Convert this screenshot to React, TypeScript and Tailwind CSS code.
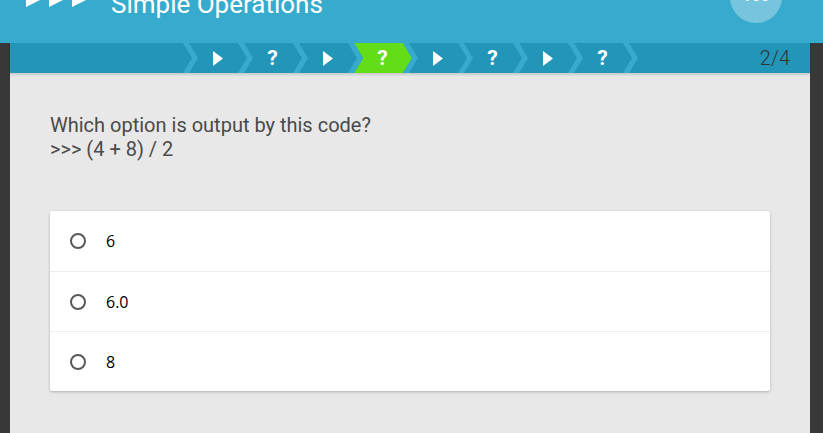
import React from "react";

const SEP = "0,0 6,0 15,15 6,30 0,30 9,15";
const GREEN = "6,0 55,0 64,15 55,30 6,30 15,15";

function Play() {
  return (
    <svg width="10" height="15" viewBox="0 0 10 15">
      <polygon points="0,0 10,7.5 0,15" fill="#ffffff" />
    </svg>
  );
}

function Step({ kind, active }: { kind: "play" | "q"; active?: boolean }) {
  return (
    <div className="relative w-[55px] h-[30px] shrink-0">
      <svg
        className="absolute left-0 top-0 overflow-visible"
        width="55"
        height="30"
        viewBox="0 0 55 30"
      >
        {active && <polygon points={GREEN} fill="#62dd18" />}
        <polygon points={SEP} fill="#37abcd" />
      </svg>
      <div className="relative h-full flex items-center justify-center pl-[14px]">
        {kind === "play" ? (
          <Play />
        ) : (
          <span className="text-white font-bold text-[21px] leading-none">?</span>
        )}
      </div>
    </div>
  );
}

export default function App() {
  const steps: { kind: "play" | "q"; active?: boolean }[] = [
    { kind: "play" },
    { kind: "q" },
    { kind: "play" },
    { kind: "q", active: true },
    { kind: "play" },
    { kind: "q" },
    { kind: "play" },
    { kind: "q" },
  ];
  const options = ["6", "6.0", "8"];
  return (
    <div
      className="w-[823px] h-[433px] overflow-hidden bg-[#383838]"
      style={{ fontFamily: "Roboto, 'Liberation Sans', sans-serif" }}
    >
      <header className="h-[43px] bg-[#37abcd] overflow-hidden flex items-start pl-[26px]">
        <div className="flex gap-[7px] -mt-[9px]">
          {[0, 1, 2].map((i) => (
            <svg key={i} width="16" height="16" viewBox="0 0 16 16">
              <polygon points="0,0 16,8 0,16" fill="#ffffff" />
            </svg>
          ))}
        </div>
        <div className="ml-[23px] -mt-[11px] text-white text-[26px] leading-[30px]">
          Simple Operations
        </div>
        <div className="ml-auto mr-[41px] -mt-[29px] w-[52px] h-[52px] rounded-full bg-[#76c4dd] flex items-center justify-center">
          <span className="text-white text-[16px] font-medium -mt-[2px]">100</span>
        </div>
      </header>
      <main className="ml-[10px] w-[800px] h-[390px] bg-[#e8e8e8]">
        <div className="relative z-10 h-[30px] bg-[#2296b9] flex items-center shadow-[0_2px_2px_rgba(0,0,0,0.12)]">
          <div className="ml-[173px] flex">
            {steps.map((s, i) => (
              <Step key={i} kind={s.kind} active={s.active} />
            ))}
            <div className="relative w-[15px] h-[30px]">
              <svg
                className="absolute left-0 top-0 overflow-visible"
                width="15"
                height="30"
                viewBox="0 0 15 30"
              >
                <polygon points={SEP} fill="#37abcd" />
              </svg>
            </div>
          </div>
          <div className="ml-auto mr-[20px] text-[20px] font-light text-[#333333]">2/4</div>
        </div>
        <div className="px-[40px] pt-[40px]">
          <div className="text-[20px] leading-[24px] text-[#4a4a4a]">
            <div>Which option is output by this code?</div>
            <div>&gt;&gt;&gt; (4 + 8) / 2</div>
          </div>
          <div className="mt-[50px] w-[720px] bg-white rounded-[2px] shadow-[0_1px_3px_rgba(0,0,0,0.25)]">
            {options.map((o, i) => (
              <div
                key={o}
                className={
                  "h-[60px] flex items-center pl-[20px] " +
                  (i > 0 ? "border-t border-[#eeeeee]" : "")
                }
              >
                <span className="w-[16px] h-[16px] rounded-full border-2 border-[#595959] box-border" />
                <span
                  className="ml-[20px] text-[16px] text-black"
                  style={{ fontFamily: "'Open Sans', 'Noto Sans', sans-serif" }}
                >
                  {o}
                </span>
              </div>
            ))}
          </div>
        </div>
      </main>
    </div>
  );
}
